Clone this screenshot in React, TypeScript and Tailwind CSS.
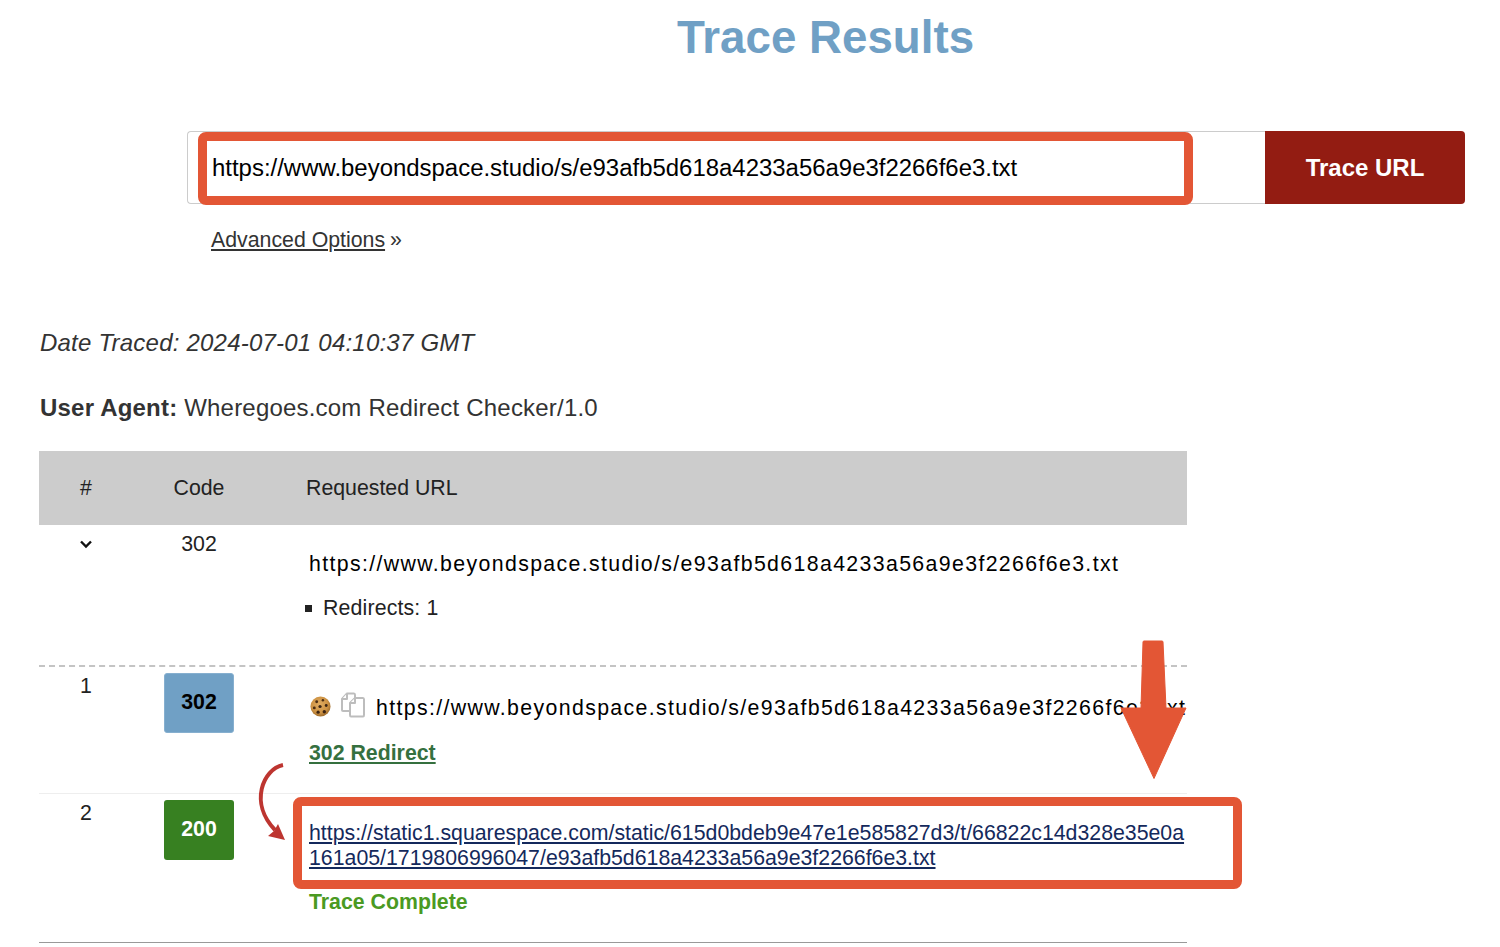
export default function App() {
  const url = "https://www.beyondspace.studio/s/e93afb5d618a4233a56a9e3f2266f6e3.txt";
  return (
    <div className="relative w-[1500px] h-[947px] overflow-hidden bg-white text-[#1a1a1a] font-['Liberation_Sans',Arial,sans-serif]">
      <h1 className="pl-[151px] pt-[12px] h-[131px] text-center text-[45.7px] leading-[52px] font-bold text-[#70a0c5]">Trace Results</h1>
      <div className="ml-[187px] w-[1278px] h-[73px] flex">
        <div className="flex-1 flex items-center pl-[24px] pt-[1px] border border-r-0 border-[#cccccc] rounded-l-[4px] text-[23.94px] text-black">{url}</div>
        <div className="w-[200px] flex items-center justify-center bg-[#931c12] rounded-r-[4px] text-white font-bold text-[24px]">Trace URL</div>
      </div>
      <div className="ml-[211px] mt-[24px] h-[26px] flex items-center gap-[5px] text-[21.3px] text-[#333333]"><span className="underline">Advanced Options</span><span>»</span></div>
      <div className="ml-[40px] mt-[74px] text-[24px] leading-[30px] italic tracking-[0.22px] text-[#333333]">Date Traced: 2024-07-01 04:10:37 GMT</div>
      <div className="ml-[40px] mt-[35px] text-[24px] leading-[30px] tracking-[0.2px] text-[#333333]"><b>User Agent:</b> Wheregoes.com Redirect Checker/1.0</div>
      <div className="ml-[39px] mt-[28px] w-[1148px]">
        <div className="h-[74px] pt-[1px] bg-[#cccccc] grid grid-cols-[94px_132px_1fr] items-center text-[21.3px] text-[#222222]">
          <div className="text-center">#</div>
          <div className="text-center">Code</div>
          <div className="pl-[41px]">Requested URL</div>
        </div>
        <div className="h-[142px] grid grid-cols-[94px_132px_1fr] border-b-2 border-dashed border-[#c4c4c4] text-[21.3px] text-[#222222]">
          <div className="flex justify-center pt-[14px]">
            <svg width="14" height="10" viewBox="0 0 14 10"><path d="M2 2.500 7 7.500 12 2.500" fill="none" stroke="#111" strokeWidth="2.400" /></svg>
          </div>
          <div className="text-center pt-[6px] leading-[26px]">302</div>
          <div className="pl-[44px] overflow-hidden">
            <div className="mt-[26px] leading-[26px] tracking-[1.36px] whitespace-nowrap text-black">{url}</div>
            <div className="mt-[18px] flex items-center leading-[26px] tracking-[0.15px]"><span className="w-[7px] h-[7px] bg-[#222222] -ml-[4px] mr-[11px]"></span>Redirects: 1</div>
          </div>
        </div>
        <div className="h-[127px] grid grid-cols-[94px_132px_1fr] border-b border-[#eeeeee] text-[21.3px] text-[#222222]">
          <div className="text-center pt-[6px] leading-[26px]">1</div>
          <div className="flex justify-center pt-[6px]">
            <div className="w-[70px] h-[60px] flex items-center justify-center bg-[#70a0c5] border border-[#86afcf] rounded-[3px] font-bold text-black">302</div>
          </div>
          <div className="pl-[44px] overflow-hidden">
            <div className="mt-[29px] h-[26px] flex items-center whitespace-nowrap">
              <svg width="21" height="21" viewBox="0 0 22 22" className="shrink-0 ml-[1px] mb-[6px]">
                <defs>
                  <radialGradient id="cookieFill" cx="45%" cy="40%" r="60%">
                    <stop offset="0%" stopColor="#e0ac62" />
                    <stop offset="70%" stopColor="#cd9243" />
                    <stop offset="100%" stopColor="#9d6a2a" />
                  </radialGradient>
                </defs>
                <circle cx="11" cy="11" r="10.500" fill="url(#cookieFill)" />
                <circle cx="7" cy="6" r="1.500" fill="#4a2c14" /><circle cx="13.500" cy="4.500" r="1.300" fill="#4a2c14" />
                <circle cx="17" cy="10" r="1.500" fill="#3c2412" /><circle cx="10.500" cy="11" r="1.700" fill="#3c2412" />
                <circle cx="4.500" cy="12.500" r="1.500" fill="#4a2c14" /><circle cx="8.500" cy="17" r="1.700" fill="#3c2412" /><circle cx="15" cy="16.500" r="1.800" fill="#3c2412" />
              </svg>
              <svg width="26" height="26" viewBox="0 0 26 26" fill="#fff" stroke="#bdbdbd" strokeWidth="2" strokeLinejoin="round" className="ml-[9px] mb-[8px] shrink-0">
                <path d="M2 7 7 1.500H14Q15 1.500 15 3V19H3Q2 19 2 18Z" /><path d="M2 7H7V1.500" />
                <path d="M10 11 15 6H23Q24 6 24 7.500V23Q24 24.500 23 24.500H11Q10 24.500 10 23Z" /><path d="M10 11H15V6" />
              </svg>
              <span className="ml-[10px] tracking-[1.36px] text-black">{url}</span>
            </div>
            <div className="mt-[18px] leading-[26px] font-bold underline text-[#35703f]">302 Redirect</div>
          </div>
        </div>
        <div className="h-[149px] grid grid-cols-[94px_132px_1fr] border-b border-[#999999] text-[21.3px] text-[#222222]">
          <div className="text-center pt-[6px] leading-[26px]">2</div>
          <div className="flex justify-center pt-[6px]">
            <div className="w-[70px] h-[60px] flex items-center justify-center bg-[#378021] rounded-[3px] font-bold text-white">200</div>
          </div>
          <div className="pl-[44px]">
            <div className="mt-[27px] w-[880px] leading-[24.5px] underline text-[#14295c] break-all">https://static1.squarespace.com/static/615d0bdeb9e47e1e585827d3/t/66822c14d328e35e0a161a05/1719806996047/e93afb5d618a4233a56a9e3f2266f6e3.txt</div>
            <div className="mt-[19px] leading-[26px] font-bold text-[#4a9a22]">Trace Complete</div>
          </div>
        </div>
      </div>
      <div className="absolute left-[198px] top-[132px] w-[995px] h-[73px] border-[9px] border-[#e35635] rounded-[8px]"></div>
      <div className="absolute left-[293px] top-[797px] w-[949px] h-[92px] border-[9px] border-[#e35635] rounded-[8px]"></div>
      <svg className="absolute left-[1115px] top-[635px]" width="80" height="150" viewBox="0 0 80 150">
        <path d="M28 7 Q28 6 29 6 H47 Q48 6 48 7 L51 73 H71 L39 143.500 L6 73 H26Z" fill="#e35635" stroke="#e35635" strokeWidth="1" strokeLinejoin="round" />
      </svg>
      <svg className="absolute left-[255px] top-[758px]" width="40" height="90" viewBox="0 0 40 90">
        <path d="M28 7 C8 11 -6 45 20 72" fill="none" stroke="#bd3530" strokeWidth="4" />
        <path d="M13 78 30 82 23 66 19 73Z" fill="#bd3530" />
      </svg>
    </div>
  );
}
